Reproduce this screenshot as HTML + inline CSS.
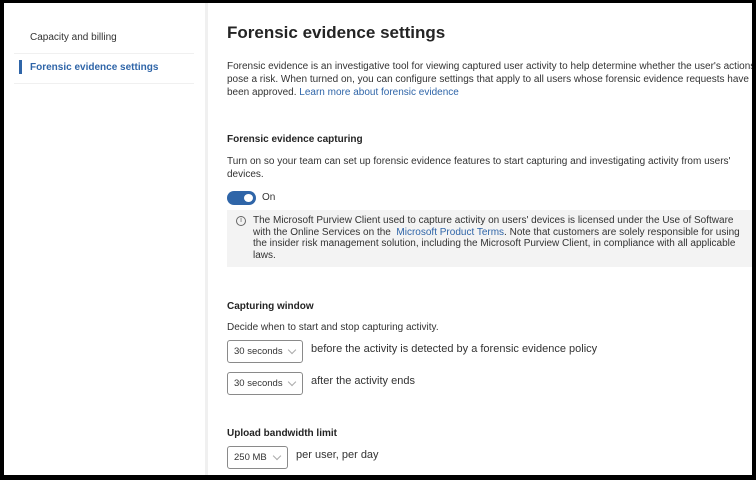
<!DOCTYPE html>
<html><head><style>
*{margin:0;padding:0;box-sizing:border-box}
body{width:756px;height:480px;background:#000;overflow:hidden;font-family:"Liberation Sans",sans-serif;color:#242424}
#f{position:absolute;left:4px;top:3px;width:748px;height:472px;background:#fff;overflow:hidden}
.a{position:absolute;white-space:nowrap}
.s{font-size:10px;line-height:13px}
.b{font-weight:bold}
.lk{color:#2f65a8}
.dd{position:absolute;border:1px solid #8a8a8a;border-radius:3px;height:23px;font-size:9.5px;line-height:21px;padding-left:6px;color:#333}
.dd:after{content:"";position:absolute;right:7px;top:6px;width:5px;height:5px;border-right:1px solid #aaa;border-bottom:1px solid #aaa;transform:rotate(45deg)}
</style></head><body><div id="f">
<div class="a" style="left:201px;top:0;width:3px;height:472px;background:#f0f0f0"></div>
<div class="a s" style="left:26px;top:28px;color:#333">Capacity and billing</div>
<div class="a" style="left:10px;top:50px;width:180px;height:1px;background:#f0f0f0"></div>
<div class="a" style="left:15px;top:57px;width:3px;height:14px;background:#2f65a8"></div>
<div class="a s b lk" style="left:26px;top:58px">Forensic evidence settings</div>
<div class="a" style="left:10px;top:80px;width:180px;height:1px;background:#f0f0f0"></div>

<div class="a b" style="left:223px;top:20px;font-size:17px">Forensic evidence settings</div>
<div class="a s" style="left:223px;top:57px;color:#333">Forensic evidence is an investigative tool for viewing captured user activity to help determine whether the user's actions<br>pose a risk. When turned on, you can configure settings that apply to all users whose forensic evidence requests have<br>been approved. <span class="lk">Learn more about forensic evidence</span></div>
<div class="a s b" style="left:223px;top:130px">Forensic evidence capturing</div>
<div class="a s" style="left:223px;top:152px;color:#333">Turn on so your team can set up forensic evidence features to start capturing and investigating activity from users'<br>devices.</div>
<div class="a" style="left:223px;top:188px;width:29px;height:14px;border-radius:7px;background:#2f65a8"></div>
<div class="a" style="left:240px;top:191px;width:9px;height:8px;border-radius:50%;background:#fff"></div>
<div class="a s" style="left:258px;top:188px;color:#333">On</div>
<div class="a" style="left:223px;top:207px;width:530px;height:57px;background:#f3f3f3"></div>
<div class="a" style="left:232px;top:213px;width:10px;height:10px;border:1px solid #666;border-radius:50%;font-size:7px;line-height:8px;text-align:center;color:#555">i</div>
<div class="a s" style="left:249px;top:212px;line-height:11.7px;color:#333">The Microsoft Purview Client used to capture activity on users' devices is licensed under the Use of Software<br>with the Online Services on the &nbsp;<span class="lk">Microsoft Product Terms</span>. Note that customers are solely responsible for using<br>the insider risk management solution, including the Microsoft Purview Client, in compliance with all applicable<br>laws.</div>
<div class="a s b" style="left:223px;top:297px">Capturing window</div>
<div class="a s" style="left:223px;top:318px;color:#333">Decide when to start and stop capturing activity.</div>
<div class="dd" style="left:223px;top:337px;width:76px">30 seconds</div>
<div class="a" style="left:307px;top:340px;font-size:11px;color:#333">before the activity is detected by a forensic evidence policy</div>
<div class="dd" style="left:223px;top:369px;width:76px">30 seconds</div>
<div class="a" style="left:307px;top:372px;font-size:11px;color:#333">after the activity ends</div>
<div class="a s b" style="left:223px;top:424px">Upload bandwidth limit</div>
<div class="dd" style="left:223px;top:443px;width:61px">250 MB</div>
<div class="a" style="left:292px;top:446px;font-size:11px;color:#333">per user, per day</div>
</div></body></html>
